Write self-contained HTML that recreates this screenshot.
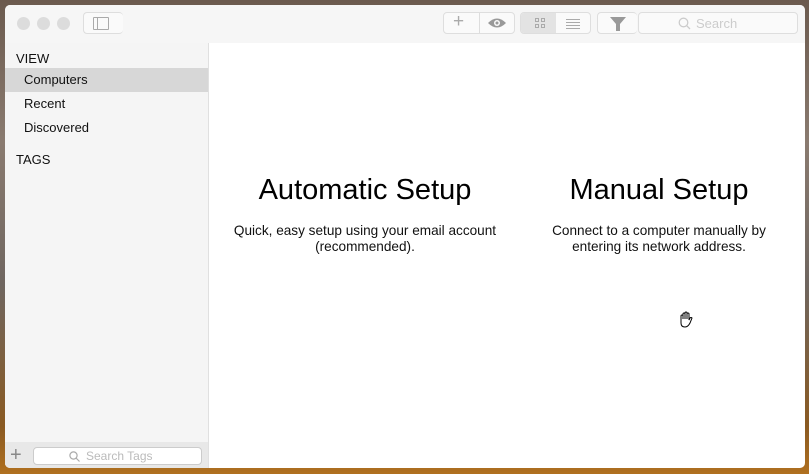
<!DOCTYPE html>
<html><head><style>
body{margin:0;width:809px;height:474px;overflow:hidden;font-family:"Liberation Sans",sans-serif;
background:linear-gradient(180deg,#6b5a4e 0%,#8a7b70 30%,#6f6660 60%,#8a5a22 90%,#b07020 100%);position:relative}
.win{position:absolute;left:5px;top:5px;width:800px;height:463px;background:#fff;border-radius:5px;overflow:hidden}
.tb{position:absolute;left:0;top:0;width:800px;height:38px;background:#f6f6f6}
.dot{position:absolute;top:12px;width:13px;height:13px;border-radius:50%;background:#dcdcdc}
.btn{position:absolute;top:7px;height:22px;border:1px solid #dedede;border-radius:4px;background:#fafafa;box-sizing:border-box}
.side{position:absolute;left:0;top:38px;width:203px;height:425px;background:#f5f5f5;border-right:1px solid #e0e0e0}
.side div{position:absolute;font-size:13px;color:#111}
.h{color:#222}
.main h1{position:absolute;font-weight:normal;font-size:29px;margin:0;color:#000;text-align:center}
.main p{position:absolute;margin:0;font-size:13.6px;line-height:16px;text-align:center;color:#111}
</style></head><body>
<div class="win">
<div class="tb">
<div class="dot" style="left:12px"></div><div class="dot" style="left:32px"></div><div class="dot" style="left:52px"></div>
<div class="btn" style="left:78px;width:40px;border-right:none"><div style="position:absolute;left:9px;top:4px;width:14px;height:11px;border:1px solid #aaa;border-radius:1px"></div><div style="position:absolute;left:13px;top:5px;width:1px;height:11px;background:#aaa"></div></div>
<div class="btn" style="left:438px;width:72px"><div style="position:absolute;left:35px;top:0;width:1px;height:20px;background:#ddd"></div>
<div style="position:absolute;left:9px;top:-2px;font-size:19px;color:#aaa">+</div>
<svg style="position:absolute;left:43px;top:4px" width="20" height="12"><path d="M1 6Q10 -3 19 6Q10 15 1 6Z" fill="#999"/><circle cx="10" cy="6" r="3" fill="#fafafa"/><circle cx="10" cy="6" r="1.5" fill="#999"/></svg></div>
<div class="btn" style="left:515px;width:71px;overflow:hidden"><div style="position:absolute;left:0;top:0;width:35px;height:20px;background:#e3e3e3"></div>
<svg style="position:absolute;left:13px;top:4px" width="12" height="12" fill="none" stroke="#aaa"><rect x="1.5" y="1.5" width="3" height="3"/><rect x="7.5" y="1.5" width="3" height="3"/><rect x="1.5" y="7.5" width="3" height="3"/><rect x="7.5" y="7.5" width="3" height="3"/></svg>
<svg style="position:absolute;left:45px;top:4px" width="14" height="12" stroke="#aaa"><path d="M0 2.5H14M0 5.5H14M0 8.5H14M0 11.5H14"/></svg></div>
<div class="btn" style="left:592px;width:40px;border-right:none"><svg style="position:absolute;left:12px;top:4px" width="16" height="14"><path d="M0 0H16L10 7V14H6V7Z" fill="#999"/></svg></div>
<div class="btn" style="left:633px;width:160px"><svg style="position:absolute;left:39px;top:4px" width="13" height="13" fill="none" stroke="#ccc" stroke-width="1.3"><circle cx="5.5" cy="5.5" r="4.3"/><path d="M8.6 8.6L12 12"/></svg><span style="position:absolute;left:57px;top:3px;font-size:13px;color:#ccc">Search</span></div>
</div>
<div class="side">
<div class="h" style="left:11px;top:8px">VIEW</div>
<div style="left:0;top:25px;width:203px;height:24px;background:#d7d7d7"></div>
<div style="left:19px;top:29px">Computers</div>
<div style="left:19px;top:53px">Recent</div>
<div style="left:19px;top:77px">Discovered</div>
<div class="h" style="left:11px;top:109px">TAGS</div>
<div style="left:0;top:399px;width:203px;height:26px;background:#e8e8e8"></div>
<div style="left:5px;top:401px;font-size:20px;color:#888">+</div>
<div style="left:28px;top:404px;width:169px;height:18px;background:#fff;border:1px solid #ccc;border-radius:4px;box-sizing:border-box"><svg style="position:absolute;left:35px;top:3px" width="11" height="11" fill="none" stroke="#aaa" stroke-width="1.2"><circle cx="4.5" cy="4.5" r="3.6"/><path d="M7 7L10.5 10.5"/></svg><span style="position:absolute;left:52px;top:1px;font-size:12px;color:#bbb">Search Tags</span></div>
</div>
<div class="main">
<h1 style="left:195px;width:330px;top:169px">Automatic Setup</h1>
<p style="left:180px;width:360px;top:218px">Quick, easy setup using your email account<br>(recommended).</p>
<h1 style="left:489px;width:330px;top:169px">Manual Setup</h1>
<p style="left:474px;width:360px;top:218px">Connect to a computer manually by<br>entering its network address.</p>
<svg style="position:absolute;left:673px;top:306px" width="16" height="17" fill="#fff" stroke="#000" stroke-width="1"><path d="M3 9V5Q3 4 4 4Q5 4 5 5V8V3Q5 2 6 2Q7 2 7 3V8V2Q7 1 8 1Q9 1 9 2V8V3Q9 2 10 2Q11 2 11 3V9L12 7Q13 6 14 7L12 12Q10 16 7 16Q3 16 3 12Z"/></svg>
</div>
</div>
</body></html>
